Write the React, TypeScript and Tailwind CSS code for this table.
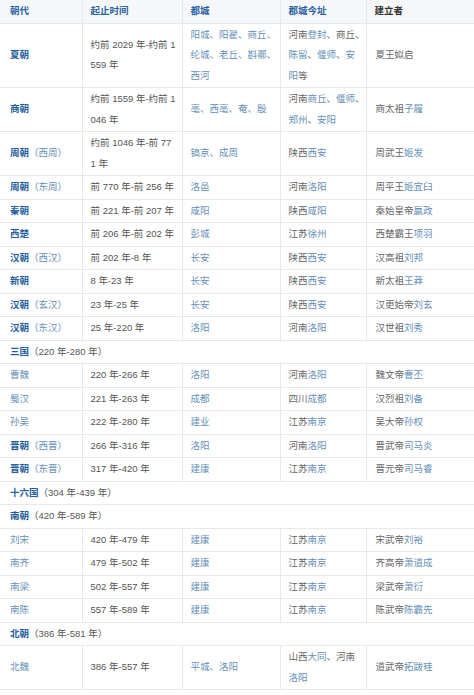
import React from 'react';

// 中国朝代表（截图复刻）
type Row =
  | { kind: 'section'; name: string; range: string }
  | {
      kind: 'row';
      name: string;
      bold?: boolean;
      sub?: string;
      time: string;
      capital: string;
      site: string;
      founder: string;
    };

const rows: Row[] = [
  {
    kind: 'row', name: '夏朝', bold: true,
    time: '约前 2029 年-约前 1\n559 年',
    capital: '[阳城、阳翟、商丘、]\n[纶城、老丘、斟鄩、]\n[西河]',
    site: '河南[登封]、商丘、\n[陈留]、[偃师]、[安]\n[阳]等',
    founder: '夏王姒启',
  },
  {
    kind: 'row', name: '商朝', bold: true,
    time: '约前 1559 年-约前 1\n046 年',
    capital: '[亳、西亳、奄、殷]',
    site: '河南[商丘]、[偃师]、\n[郑州]、[安阳]',
    founder: '商太祖[子履]',
  },
  {
    kind: 'row', name: '周朝', bold: true, sub: '（西周）',
    time: '约前 1046 年-前 77\n1 年',
    capital: '[镐京、成周]',
    site: '陕西[西安]',
    founder: '周武王[姬发]',
  },
  { kind: 'row', name: '周朝', bold: true, sub: '（东周）', time: '前 770 年-前 256 年', capital: '[洛邑]', site: '河南[洛阳]', founder: '周平王[姬宜臼]' },
  { kind: 'row', name: '秦朝', bold: true, time: '前 221 年-前 207 年', capital: '[咸阳]', site: '陕西[咸阳]', founder: '秦始皇帝[嬴政]' },
  { kind: 'row', name: '西楚', bold: true, time: '前 206 年-前 202 年', capital: '[彭城]', site: '江苏[徐州]', founder: '西楚霸王[项羽]' },
  { kind: 'row', name: '汉朝', bold: true, sub: '（西汉）', time: '前 202 年-8 年', capital: '[长安]', site: '陕西[西安]', founder: '汉高祖[刘邦]' },
  { kind: 'row', name: '新朝', bold: true, time: '8 年-23 年', capital: '[长安]', site: '陕西[西安]', founder: '新太祖[王莽]' },
  { kind: 'row', name: '汉朝', bold: true, sub: '（玄汉）', time: '23 年-25 年', capital: '[长安]', site: '陕西[西安]', founder: '汉更始帝[刘玄]' },
  { kind: 'row', name: '汉朝', bold: true, sub: '（东汉）', time: '25 年-220 年', capital: '[洛阳]', site: '河南[洛阳]', founder: '汉世祖[刘秀]' },
  { kind: 'section', name: '三国', range: '（220 年-280 年）' },
  { kind: 'row', name: '曹魏', time: '220 年-266 年', capital: '[洛阳]', site: '河南[洛阳]', founder: '魏文帝[曹丕]' },
  { kind: 'row', name: '蜀汉', time: '221 年-263 年', capital: '[成都]', site: '四川[成都]', founder: '汉烈祖[刘备]' },
  { kind: 'row', name: '孙吴', time: '222 年-280 年', capital: '[建业]', site: '江苏[南京]', founder: '吴大帝[孙权]' },
  { kind: 'row', name: '晋朝', bold: true, sub: '（西晋）', time: '266 年-316 年', capital: '[洛阳]', site: '河南[洛阳]', founder: '晋武帝[司马炎]' },
  { kind: 'row', name: '晋朝', bold: true, sub: '（东晋）', time: '317 年-420 年', capital: '[建康]', site: '江苏[南京]', founder: '晋元帝[司马睿]' },
  { kind: 'section', name: '十六国', range: '（304 年-439 年）' },
  { kind: 'section', name: '南朝', range: '（420 年-589 年）' },
  { kind: 'row', name: '刘宋', time: '420 年-479 年', capital: '[建康]', site: '江苏[南京]', founder: '宋武帝[刘裕]' },
  { kind: 'row', name: '南齐', time: '479 年-502 年', capital: '[建康]', site: '江苏[南京]', founder: '齐高帝[萧道成]' },
  { kind: 'row', name: '南梁', time: '502 年-557 年', capital: '[建康]', site: '江苏[南京]', founder: '梁武帝[萧衍]' },
  { kind: 'row', name: '南陈', time: '557 年-589 年', capital: '[建康]', site: '江苏[南京]', founder: '陈武帝[陈霸先]' },
  { kind: 'section', name: '北朝', range: '（386 年-581 年）' },
  {
    kind: 'row', name: '北魏',
    time: '386 年-557 年',
    capital: '[平城、洛阳]',
    site: '山西[大同]、河南\n[洛阳]',
    founder: '道武帝[拓跋珪]',
  },
];

// "[..]" 里的文字是链接色
const Rich: React.FC<{ text: string }> = ({ text }) => {
  const lines = text.split('\n');
  return (
    <>
      {lines.map((line, i) => (
        <React.Fragment key={i}>
          {line.split(/(\[[^\]]+\])/).map((part, j) =>
            part.startsWith('[') ? (
              <span key={j} className="text-[#6590b8]">
                {part.slice(1, -1)}
              </span>
            ) : (
              <span key={j}>{part}</span>
            )
          )}
          {i < lines.length - 1 && <br />}
        </React.Fragment>
      ))}
    </>
  );
};

const td = 'border-b border-r border-[#e7e8e9] py-px pl-[8px] pr-1 align-middle whitespace-nowrap';

export default function App() {
  return (
    <div
      className="w-[474px] bg-white text-[9.5px] leading-[20.5px] text-[#666]"
      style={{ fontFamily: '"Liberation Sans", "Noto Sans CJK SC", sans-serif' }}
    >
      <table className="w-full table-fixed border-collapse">
        <colgroup>
          <col className="w-[82px]" />
          <col className="w-[100px]" />
          <col className="w-[98px]" />
          <col className="w-[86px]" />
          <col className="w-[108px]" />
        </colgroup>
        <thead>
          <tr className="bg-[#f6f7f8] text-left font-bold">
            <th className={`${td} pl-[10px] py-[2px] text-[#2b64a1]`}>朝代</th>
            <th className={`${td} py-[2px] text-[#2b64a1]`}>起止时间</th>
            <th className={`${td} py-[2px] text-[#2b64a1]`}>都城</th>
            <th className={`${td} py-[2px] text-[#2b64a1]`}>郡城今址</th>
            <th className={`${td} py-[2px] text-[#333]`}>建立者</th>
          </tr>
        </thead>
        <tbody>
          {rows.map((r, i) =>
            r.kind === 'section' ? (
              <tr key={i}>
                <td colSpan={5} className="border-b border-r border-[#e7e8e9] py-px pl-[10px] whitespace-nowrap">
                  <span className="font-bold text-[#245e9d]">{r.name}</span>
                  <span className="text-[#555]">{r.range}</span>
                </td>
              </tr>
            ) : (
              <tr key={i}>
                <td className={`${td} pl-[10px]`}>
                  {r.bold ? (
                    <span className="font-bold text-[#245e9d]">{r.name}</span>
                  ) : (
                    <span className="text-[#6590b8]">{r.name}</span>
                  )}
                  {r.sub && <span className="text-[#6590b8]">{r.sub}</span>}
                </td>
                <td className={`${td} text-[#555]`}>
                  <Rich text={r.time} />
                </td>
                <td className={td}>
                  <Rich text={r.capital} />
                </td>
                <td className={td}>
                  <Rich text={r.site} />
                </td>
                <td className={`${td} pl-[9px]`}>
                  <Rich text={r.founder} />
                </td>
              </tr>
            )
          )}
        </tbody>
      </table>
    </div>
  );
}
